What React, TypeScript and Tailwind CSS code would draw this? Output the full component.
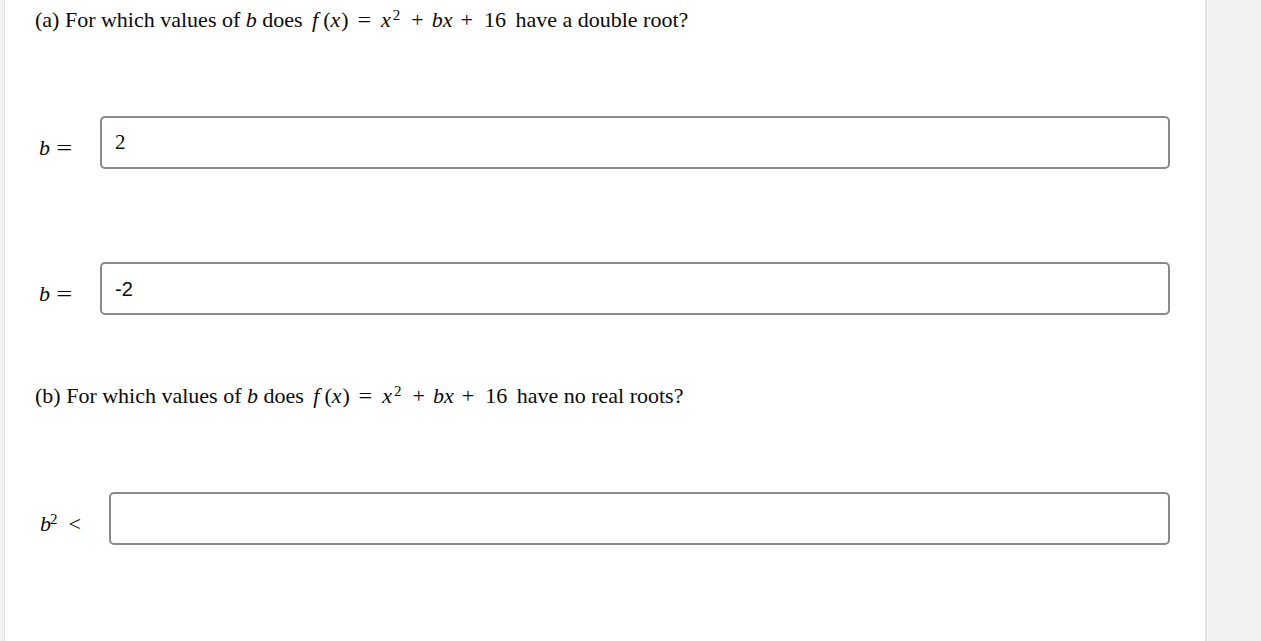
import React from "react";

const serif = { fontFamily: '"Liberation Serif", "Times New Roman", serif' };

function I({ children }: { children: React.ReactNode }) {
  return <span className="italic">{children}</span>;
}

function Formula() {
  return (
    <span className="whitespace-nowrap ml-[4px] mr-[4px]">
      <I>f</I>
      <span className="ml-[5px]">(</span>
      <I>x</I>
      <span className="ml-[1px]">)</span>
      <span className="ml-[9px] mr-[11px] inline-block scale-x-[1.1]">=</span>
      <I>x</I>
      <sup className="text-[15px] ml-[2px]">2</sup>
      <span className="ml-[11px] mr-[8px]">+</span>
      <I>bx</I>
      <span className="mx-[8px]">+</span>
      <span className="ml-[3px]">16</span>
    </span>
  );
}

function Label({ sq }: { sq?: boolean }) {
  if (sq) {
    return (
      <div className="w-[74px] pl-[5px] pt-[10px] text-[22px] whitespace-nowrap">
        <I>b</I>
        <sup className="text-[15px] ml-[-1px]">2</sup>
        <span className="ml-[11px]">&lt;</span>
      </div>
    );
  }
  return (
    <div className="w-[65px] pl-[4px] pt-[10px] text-[22px] whitespace-nowrap">
      <I>b</I>
      <span className="ml-[8px] inline-block scale-x-[1.3]">=</span>
    </div>
  );
}

export default function App() {
  return (
    <div className="flex w-[1261px] h-[641px] bg-white overflow-hidden" style={serif}>
      <div className="w-[5px] shrink-0 bg-[#f2f2f2] border-r border-[#e2e2e2]" />
      <div className="w-[1200px] shrink-0 pl-[30px] pr-[35px] text-[#0a0a0a] text-[22px]">
        <p className="mt-[6px] leading-[28px]">
          (a) For which values of <I>b</I> does <Formula /> have a double root?
        </p>
        <div className="mt-[82px] flex items-center h-[53px]">
          <Label />
          <div className="flex-1 h-[53px] border-2 border-[#8a8a8a] rounded-[5px] flex items-center pl-[13px] text-[21px]">
            2
          </div>
        </div>
        <div className="mt-[93px] flex items-center h-[53px]">
          <Label />
          <div
            className="flex-1 h-[53px] border-2 border-[#8a8a8a] rounded-[5px] flex items-center pl-[13px] text-[20px]"
            style={{ fontFamily: '"Liberation Sans", Arial, sans-serif' }}
          >
            -2
          </div>
        </div>
        <p className="mt-[67px] leading-[28px]">
          (b) For which values of <I>b</I> does <Formula /> have no real roots?
        </p>
        <div className="mt-[82px] flex items-center h-[53px]">
          <Label sq />
          <div className="flex-1 h-[53px] border-2 border-[#8a8a8a] rounded-[5px]" />
        </div>
      </div>
      <div className="flex-1 bg-[#f2f2f2] border-l-2 border-[#e4e4e4]" />
    </div>
  );
}
